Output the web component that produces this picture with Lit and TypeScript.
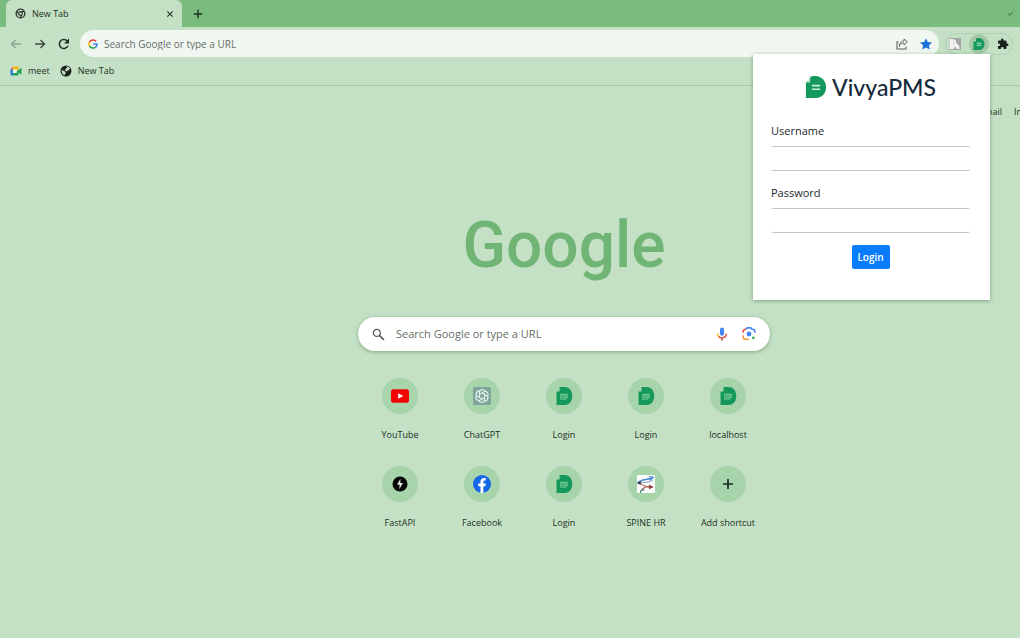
import { LitElement, html, css, svg } from "lit";
import { customElement, property } from "lit/decorators.js";

const vivya = svg`
  <path fill="#14995b" d="M5 3.5 C5 1.500 7 0 9 0 h2.5 C18 0 23 5.500 23 12 s-4 12-11 12 H1 V7 z"/>
  <path fill="#bfe6cf" d="M1 7 L5.500 2 V7 z"/>
  <path stroke="#c9f0d8" stroke-width="1.800" fill="none" d="M7.500 10.500h9M7.500 14.500h9"/>`;

const globe = svg`
  <circle cx="12" cy="12" r="11" fill="#1c241d"/>
  <path fill="#c4e1c5" d="M3.500 10 L8 12 L11 14 L11 17 L9 20.500 C5 19 3 15 3.500 10z M13 3 C16 3 18 4 20 7 L18 10 L15 11 L13 13 L10 11 L11 8 L14 6z"/>`;

const icons: Record<string, unknown> = {
  vivya,
  globe,
  chrome: svg`
    <circle cx="12" cy="12" r="9.500" fill="none" stroke="#303a31" stroke-width="3"/>
    <circle cx="12" cy="12" r="4" fill="none" stroke="#303a31" stroke-width="2.500"/>
    <path d="M12 8h9M8.500 14L4 6M15.500 14L11 22" stroke="#303a31" stroke-width="2.500"/>`,
  close: svg`<path d="M4 4l16 16M20 4L4 20" stroke="#2b3a2c" stroke-width="3.500" fill="none"/>`,
  plus: svg`<path d="M12 2v20M2 12h20" stroke="#1d2a1e" stroke-width="3.400" fill="none"/>`,
  chevron: svg`<path d="M4 12l5 6L20 6" stroke="#2f5c32" stroke-width="3" fill="none"/>`,
  back: svg`<path d="M22 12H3M11 4l-8 8 8 8" stroke="#8ba58d" stroke-width="2.800" fill="none"/>`,
  forward: svg`<path d="M2 12h19M13 4l8 8-8 8" stroke="#3c4a3d" stroke-width="2.800" fill="none"/>`,
  reload: svg`
    <path d="M20 15.500A9 9 0 1 1 18.500 6" stroke="#222d23" stroke-width="3" fill="none"/>
    <path d="M22 1v10H12z" fill="#222d23"/>`,
  google: svg`
    <path d="M19.500 5.500A10 10 0 0 0 3.500 7.500" stroke="#ea4335" stroke-width="4" fill="none"/>
    <path d="M3.500 7.500a10 10 0 0 0 0 9" stroke="#fbbc05" stroke-width="4" fill="none"/>
    <path d="M3.500 16.500a10 10 0 0 0 15 3" stroke="#34a853" stroke-width="4" fill="none"/>
    <path d="M18.500 19.500a10 10 0 0 0 3-7.500H12.500" stroke="#4285f4" stroke-width="4" fill="none"/>`,
  share: svg`
    <path d="M5 8H2v14h18v-5" stroke="#5c645d" stroke-width="2.200" fill="none"/>
    <path d="M7 17c0-5 3-7 9-7v4l7-6.500L16 2v4C9 6 7 11 7 17z" stroke="#5c645d" stroke-width="1.800" fill="none"/>`,
  star: svg`<path fill="#1b6fd8" d="M12 0.500l3.500 7.700 8.500.9-6.300 5.700 1.800 8.400L12 19l-7.500 4.200 1.800-8.400L0 9.100l8.500-.9z"/>`,
  person: svg`
    <path fill="#a3a5a4" d="M0 0h24v24H0z"/>
    <path fill="#f2f2f2" d="M1 2h8v14l-3 6H1z"/>
    <path fill="#f2f2f2" d="M9 3c4-1 6 2 5 7l4 3c3 2 3 6 3 9h-5l-4-5-3 5H5c1-4 3-6 4-8z"/>`,
  puzzle: svg`<path fill="#1a231b" d="M20.500 11H19V7c0-1.100-.9-2-2-2h-4V3.500a2.500 2.500 0 0 0-5 0V5H4c-1.100 0-2 .9-2 2v3.800h1.500a2.700 2.700 0 0 1 0 5.400H2V20c0 1.100.9 2 2 2h3.800v-1.500a2.700 2.700 0 0 1 5.400 0V22H17c1.100 0 2-.9 2-2v-4h1.500a2.500 2.500 0 0 0 0-5z"/>`,
  meet: svg`
    <path fill="#2b7de0" d="M1 9h5v12H3c-1.200 0-2-.8-2-2z"/>
    <path fill="#e8453c" d="M1 9l6-6v6z"/>
    <path fill="#f6b914" d="M6 3h9c1.200 0 2 .8 2 2v5h-4V9H6z"/>
    <path fill="#1fa451" d="M6 16h7v-3l4-3 5-4c.6-.4 1 0 1 .5v12c0 .6-.6 1-1 .5l-5-4v4c0 1.200-.8 2-2 2H6z"/>
    <path fill="#eef6ee" d="M6 9h7v7H6z"/>`,
  search: svg`
    <circle cx="9" cy="9" r="6.500" fill="none" stroke="#575c58" stroke-width="2.400"/>
    <path d="M14 14l8 8" stroke="#575c58" stroke-width="3"/>`,
  mic: svg`
    <rect x="8.500" y="1" width="7" height="14" rx="3.500" fill="#4285f4"/>
    <path d="M4.500 11c0 3 1 4.500 2.500 6" stroke="#f6b914" stroke-width="2.400" fill="none"/>
    <path d="M6.500 16.500c3 2.800 8 2.800 11 0" stroke="#ea4335" stroke-width="2.400" fill="none"/>
    <path d="M19.500 11c0 3-1 4.500-2.500 6" stroke="#ea4335" stroke-width="2.400" fill="none"/>
    <path d="M12 18v5" stroke="#b0583a" stroke-width="2.600"/>`,
  lens: svg`
    <path d="M2 10V8c0-2.500 1.500-4 4-4h1" stroke="#ea4335" stroke-width="2.600" fill="none"/>
    <path d="M7 4l2-2.500h6L17 4h1c2.500 0 4 1.500 4 4v2" stroke="#4285f4" stroke-width="2.600" fill="none"/>
    <path d="M2 14v2.500C2 19.500 3.500 21 6 21h6" stroke="#f29a38" stroke-width="2.600" fill="none"/>
    <circle cx="12" cy="12" r="4.200" fill="#4285f4"/>
    <circle cx="19.500" cy="18.500" r="2.400" fill="#34a853"/>`,
  youtube: svg`
    <rect x="0" y="3" width="24" height="18" rx="3" fill="#f00505"/>
    <path d="M9.500 8.300l7 3.700-7 3.700z" fill="#fff"/>`,
  chatgpt: svg`
    <rect width="24" height="24" rx="2" fill="#7fa59d"/>
    <g fill="none" stroke="#e6f1ed" stroke-width="1.500">
      <path d="M8.500 13.500V7c0-4 6-5 7.500-1.500"/>
      <path d="M8.500 13.500V7c0-4 6-5 7.500-1.500" transform="rotate(60 12 12)"/>
      <path d="M8.500 13.500V7c0-4 6-5 7.500-1.500" transform="rotate(120 12 12)"/>
      <path d="M8.500 13.500V7c0-4 6-5 7.500-1.500" transform="rotate(180 12 12)"/>
      <path d="M8.500 13.500V7c0-4 6-5 7.500-1.500" transform="rotate(240 12 12)"/>
      <path d="M8.500 13.500V7c0-4 6-5 7.500-1.500" transform="rotate(300 12 12)"/>
    </g>`,
  doc: svg`
    <path fill="#14995b" d="M6 0h7c6 0 10 5 10 12s-4 12-10 12H2V6h4z"/>
    <path fill="#6cc593" d="M7 9h10v5l-3 3H7z"/>
    <path stroke="#14995b" d="M8 12h8M8 15h6"/>`,
  fastapi: svg`
    <circle cx="12" cy="12" r="10" fill="#050505"/>
    <path d="M12.500 5L8 13h3.500L11 19l5-8.500h-3.500z" fill="#dfe5df"/>`,
  facebook: svg`
    <circle cx="12" cy="12" r="12" fill="#1467e8"/>
    <path fill="#fff" d="M10 24v-9H7v-3.800h3V8.800C10 5.600 12 4 14.800 4c1.200 0 2.200.2 2.200.2v3.200h-1.500c-1.400 0-1.700.8-1.700 1.700v2.100h3.300l-.6 3.800h-2.700V24z"/>`,
  spine: svg`
    <path fill="#fcfcfd" d="M0 0h24v24H0z"/>
    <path d="M1 11C6 4 14 8 22 3" stroke="#4a8ad0" stroke-width="2" fill="none"/>
    <path d="M22 3l-6-1M22 3l-5 4" stroke="#4a8ad0" stroke-width="1.600"/>
    <path d="M1 11c6-2 12 1 20-4" stroke="#8eaccc" stroke-width="1.600" fill="none"/>
    <path d="M0 11l5-3v5z" fill="#252b3a"/>
    <path d="M3 12c6 0 8 6 18 4M6 20c4-4 9-6 15-4" stroke="#b7695a" stroke-width="1.600" fill="none"/>
    <path d="M22 16l-6-3v6z" fill="#8c3b32"/>
    <path d="M10 20c-5-1-6 2-5 4" stroke="#418a7c" stroke-width="1.600" fill="none"/>`,
};

@customElement("ui-icon")
class UiIcon extends LitElement {
  @property() name = "";
  @property({ type: Number }) size = 12;

  static styles = css`
    :host { display: inline-flex; flex: none; }
    svg { display: block; }
  `;

  render() {
    return html`<svg width=${this.size} height=${this.size} viewBox="0 0 24 24" aria-hidden="true">${icons[this.name]}</svg>`;
  }
}

const shortcuts = [
  { label: "YouTube", icon: "youtube", size: 18 },
  { label: "ChatGPT", icon: "chatgpt", size: 18 },
  { label: "Login", icon: "doc", size: 18 },
  { label: "Login", icon: "doc", size: 18 },
  { label: "localhost", icon: "doc", size: 18 },
  { label: "FastAPI", icon: "fastapi", size: 18 },
  { label: "Facebook", icon: "facebook", size: 18 },
  { label: "Login", icon: "doc", size: 18 },
  { label: "SPINE HR", icon: "spine", size: 18 },
];

@customElement("login-popup")
class LoginPopup extends LitElement {
  static styles = css`
    :host {
      display: block;
      box-sizing: border-box;
      width: 237px;
      padding: 18px 20px 31px 18px;
      background: #fff;
      box-shadow: 0 1px 4px rgba(40, 80, 40, 0.45);
    }
    .brand {
      display: flex;
      align-items: center;
      justify-content: center;
      gap: 5px;
      height: 30px;
      margin: 0 0 21px;
      color: #142b3b;
      font: 500 23px/30px Lato, sans-serif;
    }
    form { display: flex; flex-direction: column; }
    label { font-size: 11px; line-height: 16px; color: #25292c; }
    input {
      box-sizing: border-box;
      width: 100%;
      height: 25px;
      margin: 7px 0 14px;
      padding: 0 4px;
      border: solid #c3c6c8;
      border-width: 1px 0;
      border-radius: 2px;
      outline: none;
      background: #fff;
      font: inherit;
    }
    #pass { margin-bottom: 12px; }
    button {
      align-self: center;
      width: 38px;
      height: 24px;
      margin: 0;
      padding: 0;
      border: 0;
      border-radius: 2px;
      background: #087cfb;
      color: #fff;
      font: 600 10px/24px "Open Sans", sans-serif;
    }
  `;

  render() {
    return html`
      <h1 class="brand"><ui-icon name="vivya" .size=${22}></ui-icon>VivyaPMS</h1>
      <form @submit=${(e: Event) => e.preventDefault()}>
        <label for="user">Username</label>
        <input id="user" type="text" autocomplete="off" />
        <label for="pass">Password</label>
        <input id="pass" type="password" autocomplete="off" />
        <button type="submit">Login</button>
      </form>
    `;
  }
}

@customElement("app-root")
class AppRoot extends LitElement {
  static styles = css`
    :host {
      display: flex;
      flex-direction: column;
      position: relative;
      min-height: 100vh;
      overflow: hidden;
      background: #c4e1c5;
      color: #233024;
      font: 9px/12px "Open Sans", "Noto Sans", sans-serif;
    }
    button {
      display: inline-flex;
      align-items: center;
      justify-content: center;
      margin: 0;
      padding: 0;
      border: 0;
      background: none;
      color: inherit;
      font: inherit;
    }
    a { color: inherit; text-decoration: none; }
    input {
      flex: 1;
      min-width: 0;
      padding: 0;
      border: 0;
      outline: none;
      background: none;
      font: inherit;
      color: inherit;
    }
    input::placeholder { color: #686e69; opacity: 1; }
    .strip {
      display: flex;
      align-items: center;
      height: 27px;
      padding: 0 6px;
      background: #7abc7d;
    }
    .tab {
      display: flex;
      align-items: center;
      box-sizing: border-box;
      width: 176px;
      height: 27px;
      padding: 0 8px 0 9px;
      gap: 6px;
      border-radius: 6px 6px 0 0;
      background: #c4e1c5;
    }
    .title { flex: 1; }
    .add { margin-left: 11px; }
    .more { margin-left: auto; }
    .toolbar {
      display: flex;
      align-items: center;
      height: 27px;
      padding: 3px 7px 0 10px;
    }
    .nav { display: flex; gap: 12px; margin-right: 10px; }
    .omnibox {
      display: flex;
      flex: 1;
      align-items: center;
      box-sizing: border-box;
      height: 27px;
      padding: 0 7px 0 8px;
      gap: 6px;
      border-radius: 14px;
      background: #f0f7f1;
      font-size: 10px;
    }
    .omnibox .actions { display: flex; gap: 12px; }
    .extensions {
      display: flex;
      align-items: center;
      box-sizing: border-box;
      height: 22px;
      margin-left: 6px;
      padding: 0 3px;
      gap: 8px;
      border: 1px solid #b2d0b4;
      border-radius: 11px;
    }
    .active {
      width: 20px;
      height: 20px;
      border-radius: 50%;
      background: #a4c8a7;
    }
    .bookmarks {
      display: flex;
      align-items: center;
      height: 28px;
      padding: 0 10px;
      gap: 10px;
      border-bottom: 1px solid #a7c9a9;
    }
    .bookmarks a { display: flex; align-items: center; gap: 6px; }
    .links {
      display: flex;
      justify-content: flex-end;
      gap: 12px;
      margin: 20px -24px 0 0;
      white-space: nowrap;
    }
    main {
      display: flex;
      flex-direction: column;
      align-items: center;
      padding-left: 108px;
    }
    .logo {
      margin: 84px 0 0;
      height: 115px;
      color: #70b576;
      font: 500 64px/88px Roboto, sans-serif;
    }
    .search {
      display: flex;
      align-items: center;
      box-sizing: border-box;
      width: 412px;
      max-width: 100%;
      height: 34px;
      padding: 0 14px;
      border-radius: 17px;
      background: #fff;
      box-shadow: 0 1px 4px rgba(40, 80, 40, 0.4);
      font-size: 11px;
    }
    .search input { margin-left: 11px; line-height: 16px; }
    .search .tools { display: flex; gap: 13px; }
    .tiles {
      display: grid;
      grid-template-columns: repeat(5, 82px);
      row-gap: 23px;
      margin-top: 27px;
    }
    .tile {
      display: flex;
      flex-direction: column;
      align-items: center;
      justify-content: flex-start;
      gap: 15px;
      height: 65px;
      line-height: 12px;
      white-space: nowrap;
    }
    .disc {
      display: flex;
      align-items: center;
      justify-content: center;
      width: 36px;
      height: 36px;
      flex: none;
      border-radius: 50%;
      background: #a8d4ac;
    }
    .popup {
      position: absolute;
      top: 54px;
      right: 30px;
    }
  `;

  private iconButton(label: string, name: string, size = 12, cls = "") {
    return html`<button class=${cls} type="button" aria-label=${label}><ui-icon name=${name} .size=${size}></ui-icon></button>`;
  }

  render() {
    return html`
      <div class="strip">
        <div class="tab">
          <ui-icon name="chrome" .size=${11}></ui-icon>
          <span class="title">New Tab</span>
          ${this.iconButton("Close tab", "close", 8)}
        </div>
        ${this.iconButton("Open a new tab", "plus", 10, "add")}
        ${this.iconButton("Search tabs", "chevron", 7, "more")}
      </div>
      <div class="toolbar">
        <div class="nav">
          ${this.iconButton("Back", "back")}
          ${this.iconButton("Forward", "forward")}
          ${this.iconButton("Reload", "reload")}
        </div>
        <div class="omnibox">
          <ui-icon name="google" .size=${10}></ui-icon>
          <input type="text" aria-label="Address" placeholder="Search Google or type a URL" />
          <div class="actions">
            ${this.iconButton("Share", "share")}
            ${this.iconButton("Bookmark this tab", "star", 12)}
          </div>
        </div>
        <div class="extensions">
          ${this.iconButton("Profile extension", "person", 12)}
          ${this.iconButton("VivyaPMS", "vivya", 12, "active")}
          ${this.iconButton("Extensions", "puzzle", 12)}
        </div>
      </div>
      <nav class="bookmarks">
        <a href="#meet"><ui-icon name="meet" .size=${12}></ui-icon>meet</a>
        <a href="#newtab"><ui-icon name="globe" .size=${12}></ui-icon>New Tab</a>
      </nav>
      <nav class="links"><a href="#mail">Gmail</a><a href="#images">Images</a></nav>
      <main>
        <div class="logo">Google</div>
        <div class="search">
          <ui-icon name="search" .size=${13}></ui-icon>
          <input type="text" aria-label="Search" placeholder="Search Google or type a URL" />
          <div class="tools">
            ${this.iconButton("Search by voice", "mic", 14)}
            ${this.iconButton("Search by image", "lens", 14)}
          </div>
        </div>
        <div class="tiles">
          ${shortcuts.map((s) => html`
            <a class="tile" href="#shortcut">
              <span class="disc"><ui-icon name=${s.icon} .size=${s.size}></ui-icon></span>
              <span>${s.label}</span>
            </a>`)}
          <button class="tile" type="button">
            <span class="disc"><ui-icon name="plus" .size=${12}></ui-icon></span>
            <span>Add shortcut</span>
          </button>
        </div>
      </main>
      <login-popup class="popup"></login-popup>
    `;
  }
}
